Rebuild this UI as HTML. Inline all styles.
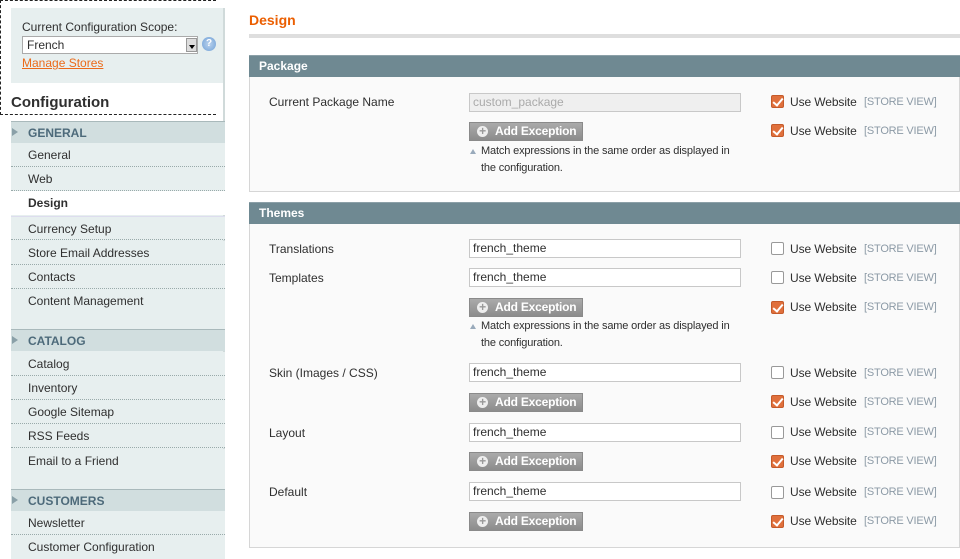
<!DOCTYPE html>
<html><head><meta charset="utf-8"><style>
*{margin:0;padding:0;box-sizing:border-box}
body{width:960px;height:549px;overflow:hidden;background:#fff;font-family:"Liberation Sans",Arial,sans-serif;font-size:12px;color:#2f2f2f;position:relative}
.a{position:absolute}
.side{left:11px;width:214px;background:#e7efef;border-right:2px solid #d0dada}
.item{position:absolute;left:11px;width:214px;height:24px;line-height:24px;padding-left:17px;border-bottom:1px dotted #9aa;background:#e7efef;font-size:12px}
.hdr{position:absolute;left:11px;width:214px;height:22px;line-height:22px;background:#d1dedf;border-top:1px solid #a9b9bb;color:#4d6a7a;font-weight:bold;font-size:12px;padding-left:17px}
.hdr:before{content:"";position:absolute;left:1px;top:6px;border-left:6px solid #8aa0a8;border-top:4px solid transparent;border-bottom:4px solid transparent}
.ph{position:absolute;left:249px;width:711px;height:22px;line-height:21px;background:#6f8992;color:#fff;font-weight:bold;padding-left:10px;border-top:1px solid #8ca0a8}
.pb{position:absolute;left:249px;width:711px;background:#fafafa;border:1px solid #d6d6d6;border-top:none}
.lbl{position:absolute;left:269px}
.inp{position:absolute;left:469px;width:272px;height:19px;border:1px solid #c8c8c8;background:#fff;padding-left:3px;line-height:17px}
.btn{position:absolute;left:469px;width:114px;height:19px;background:linear-gradient(#aaa,#8c8c8c);border:1px solid #8a8a8a;color:#fff;font-weight:bold;line-height:17px;padding-left:25px;letter-spacing:-0.2px}
.btn:before{content:"+";position:absolute;left:7px;top:3px;width:11px;height:11px;border-radius:50%;background:#eee;color:#999;font-size:12px;line-height:11px;text-align:center;font-weight:bold}
.cb{position:absolute;left:771px;width:13px;height:13px;border:1px solid #999;border-radius:2px;background:#fff}
.cb.on{background:#e0703c;border-color:#c45a2a}
.cb.on:after{content:"";position:absolute;left:3px;top:0px;width:4px;height:8px;border:solid #fff;border-width:0 2px 2px 0;transform:rotate(40deg)}
.uw{position:absolute;left:790px;letter-spacing:-0.1px}
.sv{position:absolute;left:864px;color:#8c9aa6;font-size:11px;letter-spacing:-0.2px}
.note{position:absolute;left:481px;font-size:11px;line-height:17px;letter-spacing:-0.15px}
.note:before{content:"";position:absolute;left:-11px;top:6px;border-bottom:5px solid #9ab;border-left:3px solid transparent;border-right:3px solid transparent}
</style></head><body>
<div class="a side" style="top:8px;height:75px"></div>
<div class="a" style="left:22px;top:20px">Current Configuration Scope:</div>
<div class="a" style="left:22px;top:36px;width:176px;height:18px;border:1px solid #aaa;background:#fff;padding-left:4px;line-height:16px">French</div>
<div class="a" style="left:186px;top:38px;width:11px;height:14px;background:#ddd;border:1px solid #999"><div class="a" style="left:2px;top:6px;border-top:4px solid #000;border-left:3px solid transparent;border-right:3px solid transparent"></div></div>
<div class="a" style="left:202px;top:37px;width:14px;height:14px;border-radius:50%;background:radial-gradient(#bcd4ee,#6f9fd6);color:#fff;font-size:10px;font-weight:bold;text-align:center;line-height:14px">?</div>
<div class="a" style="left:22px;top:56px;color:#eb6a1a;text-decoration:underline">Manage Stores</div>
<div class="a" style="left:223px;top:83px;width:2px;height:38px;background:#d0dada"></div>
<div class="a" style="left:11px;top:94px;font-size:15px;font-weight:bold;color:#2f2f2f">Configuration</div>
<div class="a" style="left:0;top:0;width:216px;height:115px;border:1px dashed #222;border-right:none"></div>

<div class="a side" style="top:121px;height:428px"></div>
<div class="hdr" style="top:121px">GENERAL</div>
<div class="item" style="top:143px">General</div>
<div class="item" style="top:167px">Web</div>
<div class="item" style="top:191px;background:#fff;font-weight:bold;border-bottom:none">Design</div>
<div class="item" style="top:216px;border-top:1px solid #dde">Currency Setup</div>
<div class="item" style="top:241px">Store Email Addresses</div>
<div class="item" style="top:265px">Contacts</div>
<div class="item" style="top:289px;height:40px;border-bottom:none">Content Management</div>
<div class="hdr" style="top:329px">CATALOG</div>
<div class="item" style="top:352px">Catalog</div>
<div class="item" style="top:376px">Inventory</div>
<div class="item" style="top:400px">Google Sitemap</div>
<div class="item" style="top:424px">RSS Feeds</div>
<div class="item" style="top:449px;height:40px;border-bottom:none">Email to a Friend</div>
<div class="hdr" style="top:489px">CUSTOMERS</div>
<div class="item" style="top:511px">Newsletter</div>
<div class="item" style="top:535px;border-bottom:none">Customer Configuration</div>

<div class="a" style="left:249px;top:12px;font-size:14px;font-weight:bold;color:#eb5e00">Design</div>
<div class="a" style="left:249px;top:34px;width:711px;height:4px;background:#dedede"></div>

<div class="ph" style="top:55px">Package</div>
<div class="pb" style="top:77px;height:115px"></div>
<div class="lbl" style="top:95px">Current Package Name</div>
<div class="inp" style="top:93px;background:#efefef;color:#aaa">custom_package</div>
<div class="cb on" style="top:95px"></div><div class="uw" style="top:95px">Use Website</div><div class="sv" style="top:96px">[STORE VIEW]</div>
<div class="btn" style="top:122px">Add Exception</div>
<div class="cb on" style="top:124px"></div><div class="uw" style="top:124px">Use Website</div><div class="sv" style="top:125px">[STORE VIEW]</div>
<div class="note" style="top:143px">Match expressions in the same order as displayed in<br>the configuration.</div>

<div class="ph" style="top:202px">Themes</div>
<div class="pb" style="top:224px;height:324px"></div>

<div class="lbl" style="top:242px">Translations</div>
<div class="inp" style="top:239px">french_theme</div>
<div class="cb" style="top:242px"></div><div class="uw" style="top:242px">Use Website</div><div class="sv" style="top:243px">[STORE VIEW]</div>

<div class="lbl" style="top:271px">Templates</div>
<div class="inp" style="top:268px">french_theme</div>
<div class="cb" style="top:271px"></div><div class="uw" style="top:271px">Use Website</div><div class="sv" style="top:272px">[STORE VIEW]</div>
<div class="btn" style="top:298px">Add Exception</div>
<div class="cb on" style="top:301px"></div><div class="uw" style="top:300px">Use Website</div><div class="sv" style="top:301px">[STORE VIEW]</div>
<div class="note" style="top:318px">Match expressions in the same order as displayed in<br>the configuration.</div>

<div class="lbl" style="top:366px">Skin (Images / CSS)</div>
<div class="inp" style="top:363px">french_theme</div>
<div class="cb" style="top:366px"></div><div class="uw" style="top:366px">Use Website</div><div class="sv" style="top:367px">[STORE VIEW]</div>
<div class="btn" style="top:393px">Add Exception</div>
<div class="cb on" style="top:395px"></div><div class="uw" style="top:395px">Use Website</div><div class="sv" style="top:396px">[STORE VIEW]</div>

<div class="lbl" style="top:426px">Layout</div>
<div class="inp" style="top:423px">french_theme</div>
<div class="cb" style="top:426px"></div><div class="uw" style="top:425px">Use Website</div><div class="sv" style="top:426px">[STORE VIEW]</div>
<div class="btn" style="top:452px">Add Exception</div>
<div class="cb on" style="top:455px"></div><div class="uw" style="top:454px">Use Website</div><div class="sv" style="top:455px">[STORE VIEW]</div>

<div class="lbl" style="top:485px">Default</div>
<div class="inp" style="top:482px">french_theme</div>
<div class="cb" style="top:486px"></div><div class="uw" style="top:485px">Use Website</div><div class="sv" style="top:486px">[STORE VIEW]</div>
<div class="btn" style="top:512px">Add Exception</div>
<div class="cb on" style="top:515px"></div><div class="uw" style="top:514px">Use Website</div><div class="sv" style="top:515px">[STORE VIEW]</div>
</body></html>
